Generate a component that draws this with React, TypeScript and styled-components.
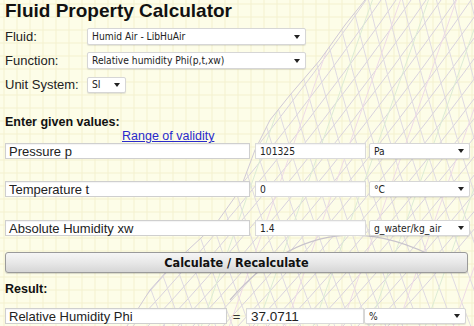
import React from 'react';
import styled, { createGlobalStyle } from 'styled-components';

const GlobalStyle = createGlobalStyle`
  html, body {
    margin: 0;
    padding: 0;
    background: #fdfde8;
  }
  body {
    font-family: "Liberation Sans", Arial, sans-serif;
    color: #111;
  }
`;

const Page = styled.div`
  position: relative;
  width: 474px;
  height: 326px;
  overflow: hidden;
  background: #fdfde8;
`;

const Content = styled.div`
  position: relative;
  z-index: 1;
  display: flex;
  flex-direction: column;
  padding: 0 4px 0 5px;
`;

const Title = styled.h1`
  margin: 0;
  font-size: 19px;
  line-height: 22px;
  font-weight: bold;
  color: #111;
`;

const SetupGrid = styled.div`
  display: grid;
  grid-template-columns: 82px auto;
  grid-auto-rows: 17px;
  row-gap: 7px;
  margin-top: 6px;
  align-items: center;
  justify-items: start;
`;

const FieldLabel = styled.span`
  font-size: 13px;
  line-height: 17px;
  color: #222;
`;

const SelectBox = styled.div<{ $width: number; $height?: number }>`
  box-sizing: border-box;
  width: ${p => p.$width}px;
  height: ${p => p.$height ?? 17}px;
  display: flex;
  align-items: center;
  justify-content: space-between;
  padding: 0 5px 0 4px;
  background: #fff;
  border: 1px solid #d6d6d6;
  border-radius: 2px;
  box-shadow: 0 1px 1px rgba(0, 0, 0, 0.1);
  font-family: "DejaVu Sans Condensed", "DejaVu Sans", Verdana, sans-serif;
  font-stretch: condensed;
  font-size: 10.2px;
  color: #222;
  white-space: nowrap;
`;

const Caret = styled.span`
  width: 0;
  height: 0;
  border-left: 3px solid transparent;
  border-right: 3px solid transparent;
  border-top: 4px solid #222;
`;

const SectionHead = styled.div<{ $top: number }>`
  margin-top: ${p => p.$top}px;
  font-size: 12.5px;
  line-height: 16px;
  font-weight: bold;
  color: #111;
`;

const ValidityLink = styled.a`
  align-self: flex-start;
  margin-left: 117px;
  font-size: 12.5px;
  line-height: 12px;
  color: #2a2acc;
  text-decoration: underline;
`;

const InputRow = styled.div<{ $top: number }>`
  display: flex;
  align-items: center;
  margin-top: ${p => p.$top}px;
  height: 16px;
`;

const TextBox = styled.div<{ $width: number; $big?: boolean }>`
  box-sizing: border-box;
  width: ${p => p.$width}px;
  height: 16px;
  display: flex;
  align-items: center;
  padding-left: 4px;
  background: #fff;
  border: 1px solid #dadada;
  box-shadow: inset 0 1px 1px rgba(0, 0, 0, 0.05);
  white-space: nowrap;
  font-family: ${p =>
    p.$big ? '"Liberation Sans", Arial, sans-serif' : '"DejaVu Sans Condensed", "DejaVu Sans", Verdana, sans-serif'};
  font-stretch: ${p => (p.$big ? 'normal' : 'condensed')};
  font-size: ${p => (p.$big ? 13.5 : 10.2)}px;
  color: #222;
`;

const LabelBox = styled(TextBox)`
  font-family: "Liberation Sans", Arial, sans-serif;
  font-stretch: normal;
  font-size: 13px;
  padding-left: 3px;
  border-color: #cfcfcf;
`;

const Equals = styled.span`
  width: 19px;
  text-align: center;
  font-size: 13px;
  color: #333;
`;

const CalcButton = styled.button`
  box-sizing: border-box;
  margin-top: 16px;
  width: 463px;
  height: 21px;
  border: 1px solid #9a9a9a;
  border-radius: 3px;
  background: linear-gradient(#f6f6f6, #e8e8e8 50%, #d6d6d6);
  box-shadow: 0 1px 1px rgba(0, 0, 0, 0.15);
  font-family: "DejaVu Sans Condensed", "DejaVu Sans", Verdana, sans-serif;
  font-stretch: condensed;
  font-size: 12.5px;
  font-weight: bold;
  color: #111;
  padding: 0;
`;

const Backdrop = styled.svg`
  position: absolute;
  inset: 0;
  z-index: 0;
`;

const satCurve =
  'M127,326 L150,290 L175,262 L215,225 L240,190 L255,150 L270,120 L290,95 L320,60 L345,25 L365,0 L474,0 L474,326 Z';

const ChartBackdrop = () => {
  const grid = Array.from({ length: 37 }, (_, i) => i * 13 + 4);
  const rising = Array.from({ length: 26 }, (_, i) => 120 + i * 15);
  const falling = Array.from({ length: 30 }, (_, i) => 60 + i * 17);
  const colored = Array.from({ length: 10 }, (_, i) => 200 + i * 28);
  return (
    <Backdrop width="474" height="326" viewBox="0 0 474 326">
      <defs>
        <clipPath id="sat">
          <path d={satCurve} />
        </clipPath>
      </defs>
      {grid.map(x => (
        <line key={'v' + x} x1={x} y1={0} x2={x} y2={326} stroke="#f4f1cf" strokeWidth="1" />
      ))}
      {grid.map(y => (
        <line key={'h' + y} x1={0} y1={y} x2={474} y2={y} stroke="#f4f1cf" strokeWidth="1" />
      ))}
      <g clipPath="url(#sat)" fill="none">
        {rising.map(x => (
          <path key={'r' + x} d={`M${x - 120},340 Q${x + 40},170 ${x + 170},-20`} stroke="#d8d2de" strokeWidth="1" />
        ))}
        {falling.map(x => (
          <path key={'f' + x} d={`M${x},-10 Q${x + 40},160 ${x + 110},340`} stroke="#dfdae2" strokeWidth="1" />
        ))}
        {colored.map((x, i) => (
          <line
            key={'c' + x}
            x1={x}
            y1={330}
            x2={x + 120}
            y2={-10}
            stroke={i % 2 ? '#eedae6' : '#dcecd4'}
            strokeWidth="1"
          />
        ))}
        <path d="M230,300 Q320,195 440,260" stroke="#c8c3cc" strokeWidth="1.2" />
      </g>
      <path
        d="M127,326 L150,290 L175,262 L215,225 L240,190 L255,150 L270,120 L290,95 L320,60 L345,25 L365,0"
        stroke="#d0c9d6"
        strokeWidth="1"
        fill="none"
      />
    </Backdrop>
  );
};

export default function App() {
  return (
    <Page>
      <GlobalStyle />
      <ChartBackdrop />
      <Content>
        <Title>Fluid Property Calculator</Title>
        <SetupGrid>
          <FieldLabel>Fluid:</FieldLabel>
          <SelectBox $width={219}>
            Humid Air - LibHuAir <Caret />
          </SelectBox>
          <FieldLabel>Function:</FieldLabel>
          <SelectBox $width={219}>
            Relative humidity Phi(p,t,xw) <Caret />
          </SelectBox>
          <FieldLabel>Unit System:</FieldLabel>
          <SelectBox $width={39} $height={16}>
            SI <Caret />
          </SelectBox>
        </SetupGrid>
        <SectionHead $top={21}>Enter given values:</SectionHead>
        <ValidityLink href="#">Range of validity</ValidityLink>

        <InputRow $top={1}>
          <LabelBox $width={245}>Pressure p</LabelBox>
          <TextBox $width={111} style={{ marginLeft: 5 }}>101325</TextBox>
          <SelectBox $width={101} $height={16} style={{ marginLeft: 3 }}>
            Pa <Caret />
          </SelectBox>
        </InputRow>
        <InputRow $top={22}>
          <LabelBox $width={245}>Temperature t</LabelBox>
          <TextBox $width={111} style={{ marginLeft: 5 }}>0</TextBox>
          <SelectBox $width={101} $height={16} style={{ marginLeft: 3 }}>
            °C <Caret />
          </SelectBox>
        </InputRow>
        <InputRow $top={23}>
          <LabelBox $width={245}>Absolute Humidity xw</LabelBox>
          <TextBox $width={111} style={{ marginLeft: 5 }}>1.4</TextBox>
          <SelectBox $width={101} $height={16} style={{ marginLeft: 3 }}>
            g_water/kg_air <Caret />
          </SelectBox>
        </InputRow>

        <CalcButton>Calculate / Recalculate</CalcButton>

        <SectionHead $top={8}>Result:</SectionHead>
        <InputRow $top={11}>
          <LabelBox $width={222}>Relative Humidity Phi</LabelBox>
          <Equals>=</Equals>
          <TextBox $width={118} $big>37.0711</TextBox>
          <SelectBox $width={102} $height={16}>
            % <Caret />
          </SelectBox>
        </InputRow>
      </Content>
    </Page>
  );
}
